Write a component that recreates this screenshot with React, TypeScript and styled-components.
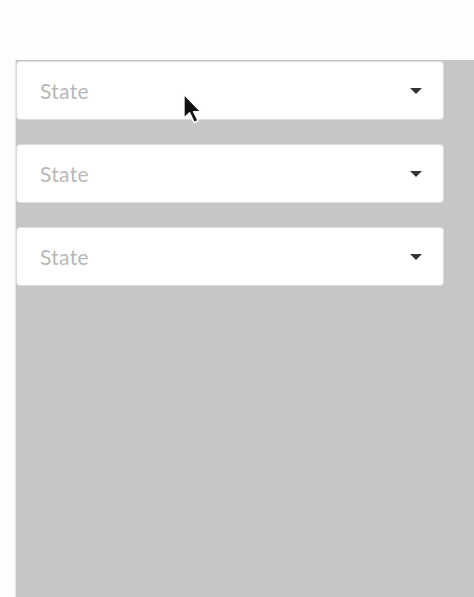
import React from 'react';
import styled, { createGlobalStyle } from 'styled-components';

const GlobalStyle = createGlobalStyle`
  html, body {
    margin: 0;
    padding: 0;
    background: #fdfdfd;
    font-family: Lato, "Open Sans", sans-serif;
  }
`;

const Page = styled.div`
  position: relative;
  width: 474px;
  height: 597px;
  overflow: hidden;
  background: #fdfdfd;
  display: flex;
  flex-direction: column;
`;

const Panel = styled.div`
  margin: 60px 0 0 15px;
  flex: 1;
  background: #c6c6c6;
  border-left: 1px solid #e6e6e6;
  display: flex;
  flex-direction: column;
  gap: 24px;
  padding-top: 1px;
`;

const Select = styled.div`
  box-sizing: border-box;
  width: 428px;
  height: 59px;
  background: #ffffff;
  border: 1px solid #dcdcdc;
  border-radius: 4px;
  display: flex;
  align-items: center;
  justify-content: space-between;
  padding: 0 21px 0 23px;
`;

const Placeholder = styled.span`
  font-size: 21px;
  color: #b8b8b8;
  letter-spacing: 0.3px;
`;

const Caret = styled.span`
  width: 0;
  height: 0;
  border-left: 6px solid transparent;
  border-right: 6px solid transparent;
  border-top: 6px solid #333;
`;

const Cursor = styled.svg`
  position: absolute;
  left: 181px;
  top: 93px;
`;

const StateSelect: React.FC<{ label: string }> = ({ label }) => (
  <Select>
    <Placeholder>{label}</Placeholder>
    <Caret />
  </Select>
);

const App: React.FC = () => (
  <>
    <GlobalStyle />
    <Page>
      <Panel>
        <StateSelect label="State" />
        <StateSelect label="State" />
        <StateSelect label="State" />
      </Panel>
      <Cursor width="24" height="34" viewBox="0 0 20 30">
        <path d="M2 1 L2 22 L7 17.5 L11 26 L14.5 24.5 L10.5 16.5 L17 16.5 Z" fill="#111" stroke="#fff" strokeWidth="1.3" strokeLinejoin="round" />
      </Cursor>
    </Page>
  </>
);

export default App;
